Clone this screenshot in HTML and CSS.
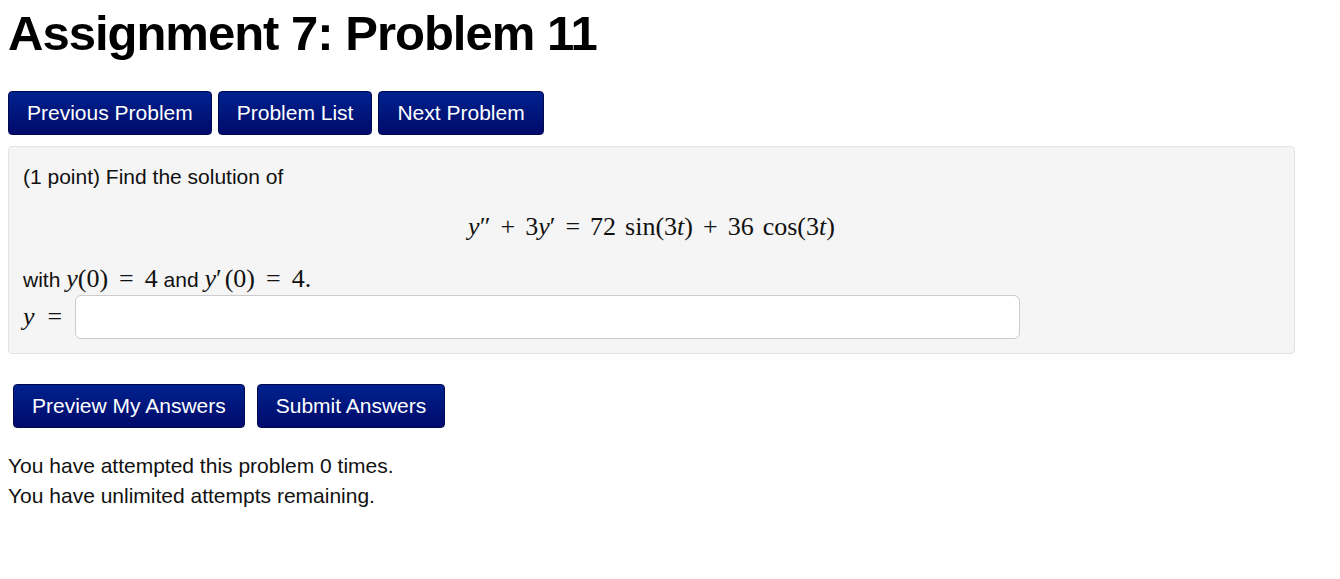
FILE: index.html
```html
<!DOCTYPE html>
<html>
<head>
<meta charset="utf-8">
<link rel="stylesheet" href="styles.css">
</head>
<body>
<h1 class="title">Assignment 7: Problem 11</h1>
<div class="nav">
  <button class="btn">Previous Problem</button>
  <button class="btn">Problem List</button>
  <button class="btn">Next Problem</button>
</div>
<div class="problem">
  <p class="intro">(1 point) Find the solution of</p>
  <div class="display"><span class="math"><i>y</i>″<span class="op">+</span>3<i>y</i>′<span class="op">=</span>72<span class="fn">sin</span>(3<i>t</i>)<span class="op">+</span>36<span class="fn">cos</span>(3<i>t</i>)</span></div>
  <p class="cond">with <span class="math"><i>y</i>(0)<span class="op">=</span>4</span> and <span class="math"><i>y</i>′<span class="gap">(0)</span><span class="op">=</span>4.</span></p>
  <div class="answer"><span class="math"><i>y</i><span class="op">=</span></span><input class="field" type="text"></div>
</div>
<div class="actions">
  <button class="btn">Preview My Answers</button>
  <button class="btn">Submit Answers</button>
</div>
<p class="info">You have attempted this problem 0 times.<br>You have unlimited attempts remaining.</p>
</body>
</html>
```
FILE: styles.css
```css
body {
  margin: 8px;
  font-family: "Liberation Sans", Arial, sans-serif;
  color: #111;
  background: #fff;
}
.title {
  font-size: 49px;
  letter-spacing: -1px;
  font-weight: bold;
  margin: -1px 0 0 0;
  line-height: 52px;
  color: #000;
}
.btn {
  font-family: "Liberation Sans", Arial, sans-serif;
  font-size: 21px;
  color: #fff;
  background: linear-gradient(#00228e, #000a6b);
  border: 1px solid #000850;
  border-radius: 4px;
  height: 44px;
  padding: 0 18px;
  margin: 0;
  cursor: pointer;
}
.nav {
  display: flex;
  gap: 6px;
  margin-top: 32px;
}
.problem {
  margin-top: 11px;
  width: 1287px;
  box-sizing: border-box;
  background: #f5f5f5;
  border: 1px solid #e3e3e3;
  border-radius: 4px;
  padding: 18px 14px 14px 14px;
  font-size: 21px;
}
.intro {
  margin: 0;
  line-height: 24px;
}
.math {
  font-family: "Liberation Serif", "Times New Roman", serif;
  font-size: 26px;
}
.math i { font-style: italic; }
.op { padding: 0 10px; }
.fn { padding-left: 9px; }
.gap { padding-left: 3px; }
.display {
  text-align: center;
  margin-top: 24px;
  line-height: 28px;
}
.cond {
  margin: 23px 0 0 0;
  line-height: 28px;
}
.cond .op { padding: 0 11px; }
.answer {
  display: flex;
  align-items: center;
  gap: 13px;
  margin-top: 1px;
}
.answer .op { padding: 0 0 0 13px; }
.field {
  width: 945px;
  height: 44px;
  box-sizing: border-box;
  border: 1px solid #ccc;
  border-radius: 6px;
  background: #fff;
}
.actions {
  display: flex;
  gap: 12px;
  margin: 30px 0 0 5px;
}
.info {
  margin: 23px 0 0 0;
  font-size: 21px;
  line-height: 30px;
}
```
